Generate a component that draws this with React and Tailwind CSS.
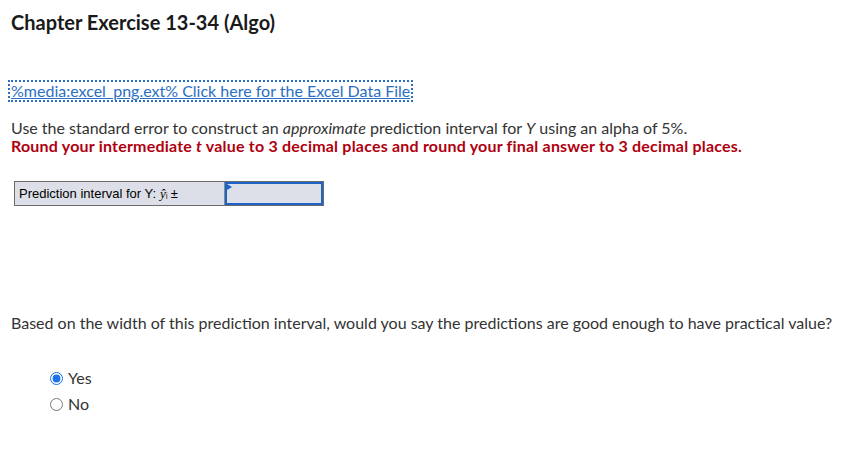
import React, { useState } from 'react';

const App = () => {
  const [answer, setAnswer] = useState('yes');

  return (
    <div className="w-[868px] h-[472px] bg-white text-[#333] font-['Lato',sans-serif]">
      <div className="pt-[10px] pl-[11px]">
        <h1 className="text-[20px] font-bold text-[#1a1a1a] leading-[24px]">Chapter Exercise 13-34 (Algo)</h1>
      </div>

      <div className="pl-[8px] pt-[45px]">
        <a
          href="#"
          className="inline-block border-2 border-dotted border-[#2a6fc4] px-[1px] text-[16px] leading-[18px] text-[#2a6fc4] underline"
        >
          %media:excel_png.ext% Click here for the Excel Data File
        </a>
      </div>

      <div className="pl-[11px] pt-[16px] text-[16px] leading-[18px]">
        <p>
          Use the standard error to construct an <i>approximate</i> prediction interval for <i>Y</i> using an alpha of 5%.
        </p>
        <p className="font-bold text-[#b0000f] tracking-[0.2px]">
          Round your intermediate <i>t</i> value to 3 decimal places and round your final answer to 3 decimal places.
        </p>
      </div>

      <div className="pl-[14px] pt-[26px]">
        <div className="flex w-[310px] h-[25px] border border-[#6b6b6b] bg-[#dcdfe7]">
          <div className="w-[210px] border-r border-[#8a8a8a] pl-[4px] flex items-center text-[13px] text-black font-['Liberation_Sans',Arial,sans-serif]">
            Prediction interval for Y: <i className="ml-[4px] font-['Liberation_Serif',serif]">ŷ</i><sub className="text-[9px] text-[#6b1a1a]">i</sub>
            <span className="ml-[3px]">±</span>
          </div>
          <div className="relative flex-1 border-2 border-[#1c64c8] bg-[#dde0e8]">
            <div className="absolute left-0 top-0 w-0 h-0 border-t-[3px] border-b-[3px] border-l-[5px] border-t-transparent border-b-transparent border-l-[#1c64c8]" />
          </div>
        </div>
      </div>

      <div className="pl-[11px] pt-[108px] text-[16px] leading-[18px]">
        <p>Based on the width of this prediction interval, would you say the predictions are good enough to have practical value?</p>
      </div>

      <div className="pl-[50px] pt-[34px] text-[16px] flex flex-col gap-[2px]">
        <label className="flex items-center gap-[5px] h-[24px]">
          <input type="radio" name="q" className="w-[13px] h-[13px] m-0 accent-[#1a73e8]" checked={answer === 'yes'} onChange={() => setAnswer('yes')} />
          <span>Yes</span>
        </label>
        <label className="flex items-center gap-[5px] h-[24px]">
          <input type="radio" name="q" className="w-[13px] h-[13px] m-0 accent-[#1a73e8]" checked={answer === 'no'} onChange={() => setAnswer('no')} />
          <span>No</span>
        </label>
      </div>
    </div>
  );
};

export default App;
